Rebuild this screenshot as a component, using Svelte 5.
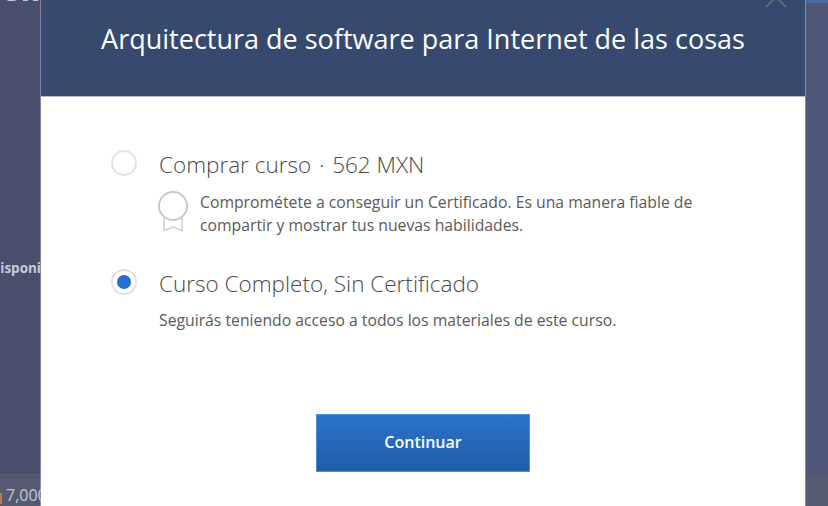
<script lang="ts">
  let choice = $state('free');
</script>

<div class="page">
  <div class="behind">
    <div class="top-strip"></div>
    <span class="peek-top">ew</span>
    <span class="peek-mid">isponi</span>
    <div class="footer-strip"><i class="dot"></i>7,000</div>
  </div>

  <section class="modal">
    <header>
      <h1>Arquitectura de software para Internet de las cosas</h1>
      <svg class="close" width="22" height="8" viewBox="0 0 22 8"><path d="M1 7 L11 -3 L21 7" fill="none" stroke="#737680" stroke-width="1.4"/></svg>
    </header>

    <div class="body">
      <label class="option">
        <input type="radio" bind:group={choice} value="buy" />
        <span class="radio"></span>
        <span class="title">Comprar curso <span class="sep">·</span> 562 MXN</span>
      </label>
      <div class="detail cert">
        <svg width="32" height="42" viewBox="0 0 32 42">
          <path d="M7 27 V39.500 L16 36 L25 39.500 V27" fill="none" stroke="#d2d2d2" stroke-width="1.6"/>
          <circle cx="16" cy="15" r="14" fill="#fff" stroke="#c9c9c9" stroke-width="2"/>
        </svg>
        <p>Comprométete a conseguir un Certificado. Es una manera fiable de compartir y mostrar tus nuevas habilidades.</p>
      </div>

      <label class="option second">
        <input type="radio" bind:group={choice} value="free" />
        <span class="radio"></span>
        <span class="title">Curso Completo, Sin Certificado</span>
      </label>
      <p class="detail plain">Seguirás teniendo acceso a todos los materiales de este curso.</p>

      <div class="actions">
        <button type="button">Continuar</button>
      </div>
    </div>
  </section>
</div>

<style>
:global(body) {
  margin: 0;
}

.page {
  position: relative;
  width: 828px;
  height: 506px;
  overflow: hidden;
  background: linear-gradient(90deg, #484e6c 0, #484e6c 41px, #505677 805px);
  font-family: "Open Sans", sans-serif;
  padding-left: 41px;
  box-sizing: border-box;
}

.behind {
  position: absolute;
  inset: 0;
  font-weight: 600;
  color: #c9ccd6;
}
.behind span {
  position: absolute;
  white-space: nowrap;
}
.top-strip {
  position: absolute;
  left: 805px;
  right: 0;
  top: 0;
  height: 3px;
  background: #486a9c;
}
.peek-top {
  left: 2px;
  top: -27px;
  font-size: 28px;
  line-height: 34px;
  font-weight: 700;
}
.peek-mid {
  right: 787px;
  top: 259px;
  font-size: 13.500px;
  line-height: 18px;
  font-weight: 700;
}
.footer-strip {
  position: absolute;
  left: 0;
  right: 0;
  bottom: 0;
  height: 32px;
  background: #555a70;
  display: flex;
  align-items: flex-end;
  padding-left: 6px;
  font-size: 16px;
  font-weight: 400;
  line-height: 22px;
  color: #c4c8d4;
  box-sizing: border-box;
}
.dot {
  position: absolute;
  left: -3px;
  bottom: 2px;
  width: 5px;
  height: 11px;
  background: #c27a3a;
}

.modal {
  position: relative;
  width: 764px;
  height: 506px;
  background: #fff;
  box-shadow: 0 0 0 1px rgba(200, 205, 220, 0.45);
}

header {
  position: relative;
  height: 97px;
  box-sizing: border-box;
  background: #364a70;
  border-bottom: 1px solid #b4bccb;
  display: flex;
  align-items: center;
  justify-content: center;
  padding-bottom: 18px;
}
h1 {
  margin: 0;
  font-size: 27px;
  font-weight: 400;
  line-height: 38px;
  color: #fff;
  white-space: nowrap;
}
.close {
  position: absolute;
  right: 18px;
  top: 0;
}

.body {
  padding: 52px 70px 0;
}

.option {
  display: flex;
  align-items: center;
  gap: 22px;
  cursor: pointer;
}
.option.second {
  margin-top: 31px;
}
.option input {
  position: absolute;
  width: 0;
  height: 0;
  opacity: 0;
}
.radio {
  width: 22px;
  height: 22px;
  border: 2px solid #e3e3e3;
  border-radius: 50%;
  position: relative;
  flex: none;
  margin-bottom: 5px;
}
.option input:checked + .radio::before {
  content: "";
  position: absolute;
  left: 4px;
  top: 4px;
  width: 14px;
  height: 14px;
  border-radius: 50%;
  background: #2470cc;
}
.title {
  font-size: 22.500px;
  font-weight: 300;
  line-height: 32px;
  color: #4a4a4a;
  white-space: nowrap;
}
.sep {
  margin: 0 2px;
}

.detail {
  font-size: 15.750px;
  line-height: 23px;
  color: #5a5a5a;
  margin: 0;
}
.cert {
  display: flex;
  gap: 11px;
  margin: 10px 0 0 46px;
  width: 545px;
}
.cert svg {
  flex: none;
}
.cert p {
  margin: 0;
}
.plain {
  margin: 9px 0 0 48px;
}

.actions {
  display: flex;
  justify-content: center;
  margin-top: 82px;
}
button {
  width: 214px;
  height: 58px;
  padding: 0 0 2px;
  border: 1px solid #4a90e2;
  background: linear-gradient(180deg, #2a73cc, #215ca8);
  color: #fff;
  font-family: inherit;
  font-size: 16px;
  font-weight: 600;
  cursor: pointer;
}
</style>
